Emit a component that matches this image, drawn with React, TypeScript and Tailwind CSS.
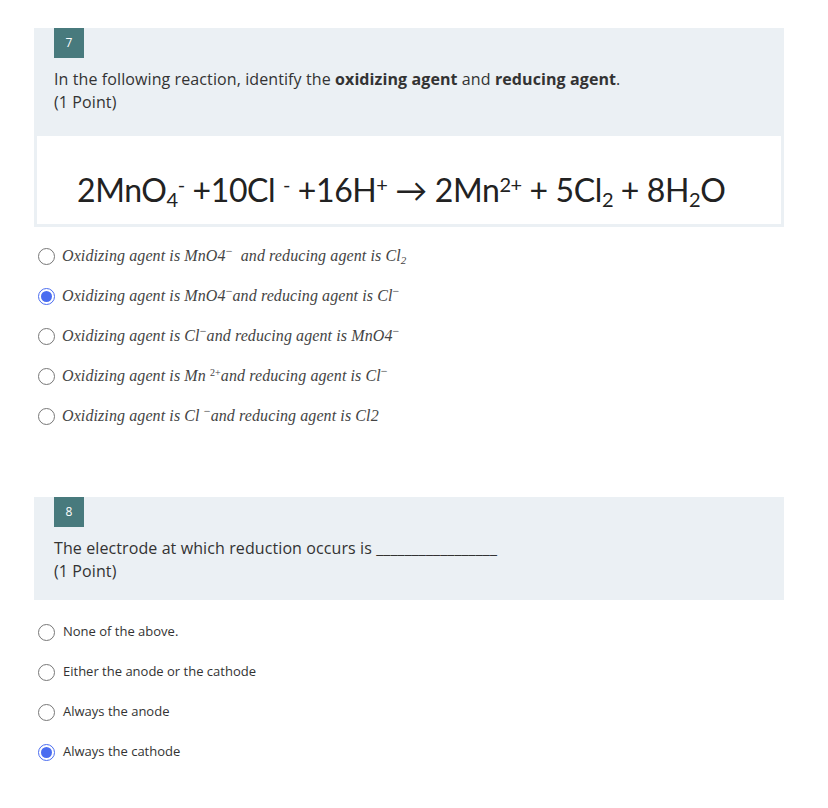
import React from "react";

const Radio = ({ checked }: { checked?: boolean }) =>
  checked ? (
    <span className="flex h-[17px] w-[17px] shrink-0 items-center justify-center rounded-full border-[1.5px] border-[#4a6cf0] bg-white">
      <span className="h-[11px] w-[11px] rounded-full bg-[#4a6cf0]" />
    </span>
  ) : (
    <span className="h-[17px] w-[17px] shrink-0 rounded-full border border-[#777] bg-white" />
  );

const serif = { fontFamily: '"Liberation Serif", serif' };

const M = () => <sup className="text-[12px] not-italic">−</sup>;

const Opt1 = ({ checked, children }: { checked?: boolean; children: React.ReactNode }) => (
  <div className="flex h-[40px] items-center gap-[7px] pl-[38px]">
    <Radio checked={checked} />
    <span className="text-[16px] italic tracking-[0.1px] text-[#444]" style={serif}>
      {children}
    </span>
  </div>
);

const Opt2 = ({ checked, children }: { checked?: boolean; children: React.ReactNode }) => (
  <div className="flex h-[40px] items-center gap-[8px] pl-[38px]">
    <Radio checked={checked} />
    <span className="text-[13px] text-[#333]">{children}</span>
  </div>
);

export default function App() {
  return (
    <div
      className="min-h-[808px] w-[828px] bg-white pt-[28px] text-[#333]"
      style={{ fontFamily: '"Open Sans", "Noto Sans", sans-serif' }}
    >
      <div className="mx-[34px] w-[750px] bg-[#ebf0f4] px-[3px] pb-[3px]">
        <div className="px-[17px]">
          <div className="flex h-[30px] w-[30px] items-center justify-center bg-[#487a7d] text-[12px] text-white">
            7
          </div>
          <div className="pt-[10px] text-[16px] leading-[23px] tracking-[0.1px]">
            In the following reaction, identify the <b>oxidizing agent</b> and <b>reducing agent</b>.
          </div>
          <div className="pb-[22px] text-[16px] leading-[23px] tracking-[0.1px]">(1 Point)</div>
        </div>
        <div className="flex h-[88px] items-center bg-white pl-[40px] pt-[20px]">
          <span
            className="text-[32px] tracking-[-0.4px] text-[#222]"
            style={{ fontFamily: 'Lato, "Liberation Sans", sans-serif' }}
          >
            2MnO<sub className="text-[20px]">4</sub>
            <sup className="text-[20px]">-</sup> +10Cl <sup className="text-[20px]">-</sup> +16H
            <sup className="text-[20px]">+</sup> → 2Mn<sup className="text-[20px]">2+</sup> + 5Cl
            <sub className="text-[20px]">2</sub> + 8H<sub className="text-[20px]">2</sub>O
          </span>
        </div>
      </div>

      <div className="pt-[9px]">
        <Opt1>
          Oxidizing agent is MnO4<M /> &nbsp;and reducing agent is Cl<sub className="text-[11px]">2</sub>
        </Opt1>
        <Opt1 checked>
          Oxidizing agent is MnO4<M />and reducing agent is Cl<M />
        </Opt1>
        <Opt1>
          Oxidizing agent is Cl<M />and reducing agent is MnO4<M />
        </Opt1>
        <Opt1>
          Oxidizing agent is Mn <sup className="text-[10px] not-italic">2+</sup>and reducing agent is Cl<M />
        </Opt1>
        <Opt1>
          Oxidizing agent is Cl <M />and reducing agent is Cl2
        </Opt1>
      </div>

      <div className="mx-[34px] mt-[61px] w-[750px] bg-[#ebf0f4] px-[20px]">
        <div className="flex h-[30px] w-[30px] items-center justify-center bg-[#487a7d] text-[12px] text-white">
          8
        </div>
        <div className="pt-[10px] text-[16px] leading-[23px] tracking-[0.1px]">
          The electrode at which reduction occurs is _________________
        </div>
        <div className="pb-[17px] text-[16px] leading-[23px] tracking-[0.1px]">(1 Point)</div>
      </div>

      <div className="pt-[12px]">
        <Opt2>None of the above.</Opt2>
        <Opt2>Either the anode or the cathode</Opt2>
        <Opt2>Always the anode</Opt2>
        <Opt2 checked>Always the cathode</Opt2>
      </div>
    </div>
  );
}
